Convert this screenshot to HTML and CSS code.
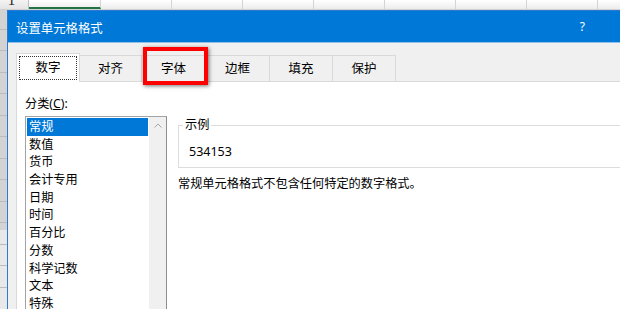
FILE: index.html
```html
<!DOCTYPE html>
<html lang="zh-CN">
<head>
	<meta charset="UTF-8">
	<title>设置单元格格式</title>
	<link rel="stylesheet" href="styles.css">
</head>
<body>
<div class="sheet-row">
	<div class="row-head"><span class="row-num">1</span></div>
	<div class="cell cell-active"></div>
	<div class="cell"></div>
	<div class="cell"></div>
	<div class="cell"></div>
	<div class="cell"></div>
	<div class="cell"></div>
	<div class="cell"></div>
	<div class="cell"></div>
	<div class="cell"></div>
</div>
<div class="screen">
	<div class="row-strip"></div>
	<div class="dialog">
		<div class="titlebar">
			<span class="title">设置单元格格式</span>
			<span class="help">?</span>
		</div>
		<div class="tabs">
			<div class="tab tab-on"><span class="focus">数字</span></div>
			<div class="tab tab-w1">对齐</div>
			<div class="tab tab-w2">字体</div>
			<div class="tab tab-w2">边框</div>
			<div class="tab tab-w3">填充</div>
			<div class="tab tab-w3">保护</div>
		</div>
		<div class="page">
			<div class="col-left">
				<div class="label">分类(<u>C</u>):</div>
				<div class="listbox">
					<ul class="items">
						<li class="sel">常规</li>
						<li>数值</li>
						<li>货币</li>
						<li>会计专用</li>
						<li>日期</li>
						<li>时间</li>
						<li>百分比</li>
						<li>分数</li>
						<li>科学记数</li>
						<li>文本</li>
						<li>特殊</li>
					</ul>
					<div class="vscroll">
						<div class="arrow-up">
							<svg width="8" height="5" viewBox="0 0 8 5"><path d="M0.5 4.5 L4 1 L7.5 4.5" fill="none" stroke="#a6a6a6" stroke-width="1"/></svg>
						</div>
					</div>
				</div>
			</div>
			<div class="col-right">
				<fieldset class="sample">
					<legend>示例</legend>
					<div class="sample-value">534153</div>
				</fieldset>
				<div class="desc">常规单元格格式不包含任何特定的数字格式。</div>
			</div>
		</div>
	</div>
</div>
<div class="mark"></div>
</body>
</html>
```
FILE: styles.css
```css
*{
	margin: 0;
	padding: 0;
	box-sizing: border-box;
}
body {
	width: 620px;
	height: 309px;
	overflow: hidden;
	position: relative;
	background: #fff;
	font-family: "Noto Sans", "Noto Sans CJK SC", sans-serif;
	font-size: 12.2px;
	color: #000;
}
/* excel behind the dialog */
.sheet-row {
	display: flex;
	height: 10px;
	background: linear-gradient(#fff, #ececec);
	border-bottom: 1px solid #d0d0d0;
	overflow: hidden;
}
.row-head {
	width: 29px;
	flex: none;
	border-right: 1px solid #bdbdbd;
	padding-right: 5px;
	text-align: center;
	background: linear-gradient(#f4f4f4, #e4e4e4);
}
.row-num {
	display: block;
	margin-top: -8px;
	font-family: "Liberation Serif", serif;
	font-size: 15px;
	line-height: 16px;
	color: #222;
}
.cell {
	width: 71px;
	flex: none;
	border-right: 1px solid #d4d4d4;
}
.cell-active {
	width: 72px;
	border-bottom: 2px solid #217346;
}
.screen {
	display: flex;
	height: 299px;
}
.row-strip {
	width: 7px;
	flex: none;
	background:
		repeating-linear-gradient(to bottom, transparent 0 20.5px, #bcbcbc 20.5px 21.5px) 0 -2px,
		linear-gradient(#d3d3d3 0 220px, #e8e8e8 220px);
}
/* dialog */
.dialog {
	flex: 1;
	display: flex;
	flex-direction: column;
	background: #f0f0f0;
	border-left: 1px solid #2b7bd3;
	border-top: 1px solid #2b7bd3;
	overflow: hidden;
}
.titlebar {
	display: flex;
	align-items: center;
	height: 32px;
	flex: none;
	background: #0078d7;
	border-bottom: 1px solid #8fc0ea;
	color: #fff;
	padding-left: 8px;
}
.title {
	font-size: 12.4px;
	padding-top: 3px;
}
.help {
	margin-left: auto;
	margin-right: 35px;
	font-size: 12px;
	padding-bottom: 1px;
}
.tabs {
	display: flex;
	align-items: flex-end;
	height: 38px;
	padding-left: 8px;
	flex: none;
}
.tab {
	height: 26px;
	margin-left: -1px;
	border: 1px solid #d9d9d9;
	border-bottom: none;
	background: #f0f0f0;
	text-align: center;
	font-size: 12.5px;
	line-height: 16px;
	padding-top: 5px;
}
.tab-w1 { width: 63px; }
.tab-w2 { width: 65px; }
.tab-w3 { width: 64px; }
.tab-on {
	width: 64px;
	height: 29px;
	margin-left: 0;
	margin-bottom: -1px;
	padding-top: 0;
	background: #fff;
	position: relative;
	z-index: 1;
}
.focus {
	display: block;
	height: 24px;
	margin: 2px 2px 0;
	border: 1px dotted #333;
	line-height: 22px;
}
.page {
	flex: 1;
	display: flex;
	gap: 11px;
	margin-left: 8px;
	background: #fff;
	border-left: 1px solid #d9d9d9;
	border-top: 1px solid #d9d9d9;
	padding: 14px 0 0 8px;
}
.col-left {
	width: 142px;
	flex: none;
}
.label {
	line-height: 16px;
}
.listbox {
	display: flex;
	margin-top: 4px;
	height: 220px;
	border: 1px solid #a3a3a3;
	border-right-color: #8e8e8e;
}
.items {
	list-style: none;
	flex: 1;
	padding: 1px;
}
.items li {
	height: 17.7px;
	line-height: 17.7px;
	padding-left: 2px;
	white-space: nowrap;
}
.items .sel {
	background: #0078d7;
	color: #fff;
}
.vscroll {
	width: 17px;
	flex: none;
	background: #f0f0f0;
}
.arrow-up {
	height: 17px;
	display: flex;
	align-items: center;
	justify-content: center;
}
.col-right {
	flex: 1;
	margin-right: -20px;
}
.sample {
	margin-top: 21px;
	padding: 0 0 7px 4px;
	border: 1px solid #dcdcdc;
	min-width: 0;
}
.sample legend {
	padding: 0 2px;
	line-height: 16px;
	font-size: 12.2px;
}
.sample-value {
	margin-top: 11px;
	padding-left: 6px;
	line-height: 16px;
	font-size: 12.5px;
}
.desc {
	margin-top: 8px;
	line-height: 16px;
}
/* red highlight round the font tab */
.mark {
	position: absolute;
	left: 143px;
	top: 47px;
	width: 65px;
	height: 38px;
	border: 4px solid #ff0000;
	box-shadow: 1px 1px 4px rgba(0,0,0,.55);
	z-index: 5;
}
```
